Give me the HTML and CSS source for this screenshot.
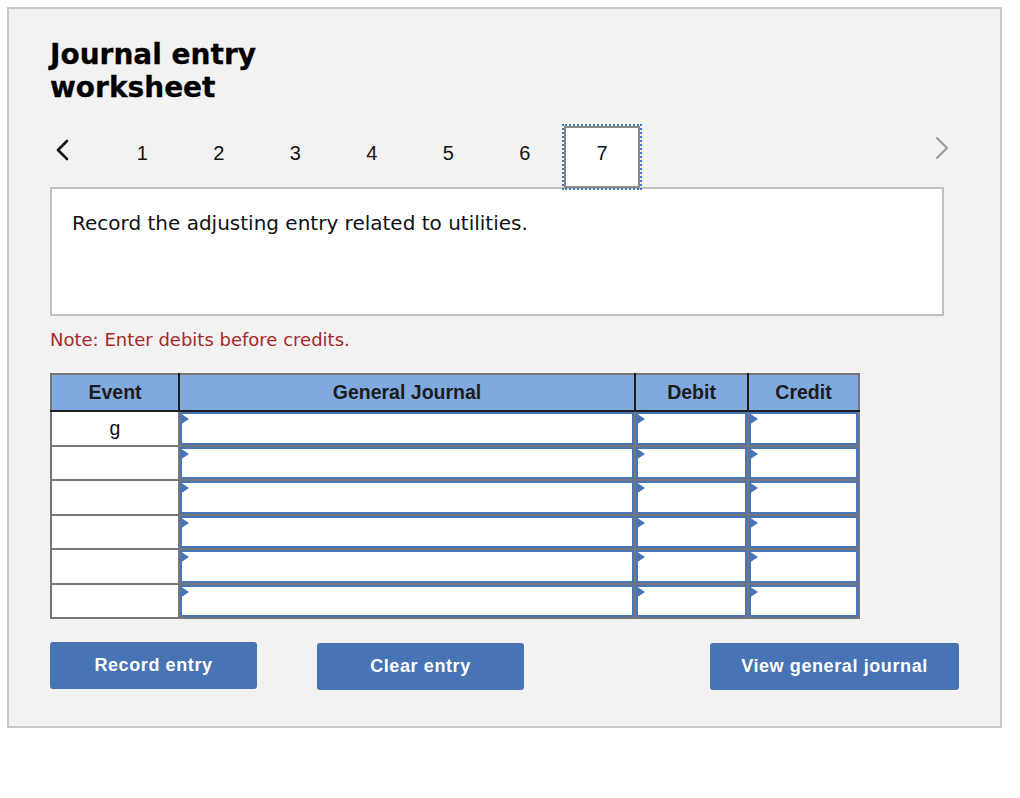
FILE: index.html
```html
<!DOCTYPE html>
<html lang="en">
<head>
<meta charset="utf-8">
<title>Journal entry worksheet</title>
<link rel="stylesheet" href="styles.css">
</head>
<body>
<div class="panel">
  <h1 class="title">Journal entry<br>worksheet</h1>

  <div class="nav">
    <div class="nav-prev">
      <svg width="16" height="22" viewBox="0 0 16 22"><polyline points="13,2 4,11 13,20" fill="none" stroke="#111" stroke-width="2.6" stroke-linecap="round" stroke-linejoin="round"/></svg>
    </div>
    <div class="tab">1</div>
    <div class="tab">2</div>
    <div class="tab">3</div>
    <div class="tab">4</div>
    <div class="tab">5</div>
    <div class="tab">6</div>
    <div class="tab tab-active">7</div>
    <div class="nav-next">
      <svg width="16" height="22" viewBox="0 0 16 22"><polyline points="3,1 13,11 3,21" fill="none" stroke="#9a9a9a" stroke-width="2.2" stroke-linecap="round" stroke-linejoin="round"/></svg>
    </div>
  </div>

  <div class="prompt">Record the adjusting entry related to utilities.</div>

  <p class="note">Note: Enter debits before credits.</p>

  <table class="journal">
    <colgroup>
      <col class="c-event">
      <col class="c-gj">
      <col class="c-debit">
      <col class="c-credit">
    </colgroup>
    <thead>
      <tr>
        <th>Event</th>
        <th>General Journal</th>
        <th>Debit</th>
        <th>Credit</th>
      </tr>
    </thead>
    <tbody>
      <tr><td class="ev">g</td><td><div class="inp"></div></td><td><div class="inp"></div></td><td><div class="inp"></div></td></tr>
      <tr><td class="ev"></td><td><div class="inp"></div></td><td><div class="inp"></div></td><td><div class="inp"></div></td></tr>
      <tr><td class="ev"></td><td><div class="inp"></div></td><td><div class="inp"></div></td><td><div class="inp"></div></td></tr>
      <tr><td class="ev"></td><td><div class="inp"></div></td><td><div class="inp"></div></td><td><div class="inp"></div></td></tr>
      <tr><td class="ev"></td><td><div class="inp"></div></td><td><div class="inp"></div></td><td><div class="inp"></div></td></tr>
      <tr><td class="ev"></td><td><div class="inp"></div></td><td><div class="inp"></div></td><td><div class="inp"></div></td></tr>
    </tbody>
  </table>

  <div class="actions">
    <button class="btn btn-record">Record entry</button>
    <button class="btn btn-clear">Clear entry</button>
    <button class="btn btn-view">View general journal</button>
  </div>
</div>
</body>
</html>
```

FILE: styles.css
```css
html, body {
  margin: 0;
  padding: 0;
  background: #ffffff;
}

.panel {
  box-sizing: border-box;
  margin: 7px 0 0 7px;
  width: 995px;
  height: 721px;
  border: 2px solid #c8c8c8;
  background: #f2f2f2;
  padding: 29px 0 0 41px;
}

.title {
  margin: 0;
  font-family: "DejaVu Sans", Verdana, sans-serif;
  font-weight: bold;
  font-size: 28px;
  line-height: 33px;
  color: #000;
  -webkit-text-stroke: 0.3px #000;
}

.nav {
  display: flex;
  align-items: center;
  width: 910px;
  height: 62px;
  margin-top: 22px;
  font-family: "Liberation Sans", Arial, sans-serif;
  font-size: 20px;
  color: #111;
}

.nav-prev {
  width: 54px;
  height: 62px;
  display: flex;
  align-items: center;
  padding-left: 4px;
  padding-bottom: 14px;
  box-sizing: border-box;
}

.nav-prev svg, .nav-next svg {
  display: block;
}

.tab {
  width: 76.5px;
  height: 62px;
  box-sizing: border-box;
  display: flex;
  align-items: center;
  justify-content: center;
  padding-bottom: 8px;
}

.tab-active {
  width: 76px;
  margin-left: 1px;
  background: #ffffff;
  border: 2px solid #8a8a8a;
  outline: 2px dotted #4a74b8;
  position: relative;
  z-index: 1;
}

.nav-next {
  margin-left: auto;
  width: 26px;
  height: 62px;
  box-sizing: border-box;
  display: flex;
  align-items: center;
  padding-bottom: 18px;
}

.prompt {
  box-sizing: border-box;
  width: 894px;
  height: 129px;
  margin-top: -1px;
  background: #ffffff;
  border: 2px solid #c0c0c0;
  padding: 20px 0 0 20px;
  font-family: "DejaVu Sans", Verdana, sans-serif;
  font-size: 20px;
  line-height: 28px;
  color: #111;
}

.note {
  margin: 13px 0 0 0;
  font-family: "DejaVu Sans", Verdana, sans-serif;
  font-size: 18px;
  line-height: 22px;
  color: #a8282a;
}

.journal {
  margin-top: 22px;
  border-collapse: collapse;
  table-layout: fixed;
  width: 808px;
  border: 2px solid #777777;
  font-family: "Liberation Sans", Arial, sans-serif;
}

.c-event { width: 128px; }
.c-gj { width: 456px; }
.c-debit { width: 113px; }
.c-credit { width: 111px; }

.journal th {
  height: 35px;
  padding: 0;
  background: #80a9df;
  font-size: 19.5px;
  font-weight: bold;
  color: #1c1c1c;
  border-left: 2px solid #1e1e1e;
  border-right: 2px solid #1e1e1e;
  border-top: 2px solid #777777;
  border-bottom: 2px solid #1e1e1e;
  text-align: center;
  vertical-align: middle;
}

.journal th:first-child {
  border-left-color: #777777;
}

.journal th:last-child {
  border-right-color: #777777;
}

.journal td {
  padding: 0;
  height: 32.5px;
  border: 2px solid #777777;
  background: #ffffff;
  vertical-align: top;
}

.journal td.ev {
  text-align: center;
  vertical-align: middle;
  font-size: 19.5px;
  color: #111;
}

.inp {
  position: relative;
  box-sizing: border-box;
  height: 32.5px;
  border: 2px solid #4a74b8;
  background: #ffffff;
}

.inp::before {
  content: "";
  position: absolute;
  left: -2px;
  top: -1px;
  width: 0;
  height: 0;
  border-top: 6px solid transparent;
  border-bottom: 6px solid transparent;
  border-left: 9px solid #4a74b8;
}

.actions {
  display: flex;
  align-items: flex-start;
  margin-top: 23px;
}

.btn {
  box-sizing: border-box;
  height: 47px;
  border: none;
  border-radius: 3px;
  background: #4873b5;
  color: #ffffff;
  font-family: "Liberation Sans", Arial, sans-serif;
  font-weight: bold;
  font-size: 18px;
  letter-spacing: 0.6px;
  padding: 0;
  cursor: pointer;
}

.btn-record {
  width: 207px;
}

.btn-clear {
  width: 207px;
  margin-left: 60px;
  margin-top: 1px;
}

.btn-view {
  width: 249px;
  margin-left: 186px;
  margin-top: 1px;
}
```
